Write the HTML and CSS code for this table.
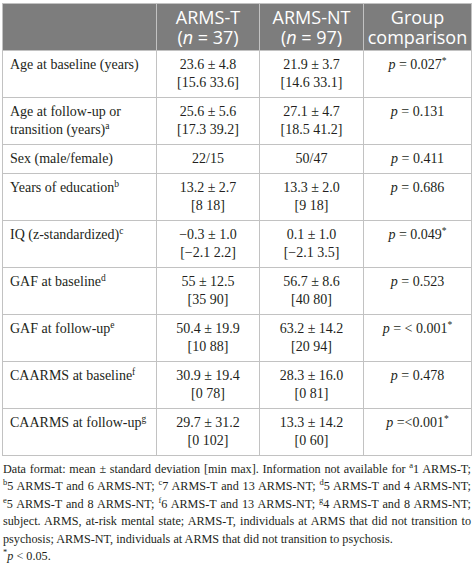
FILE: index.html
```html
<!DOCTYPE html>
<html>
<head>
<meta charset="utf-8">
<link rel="stylesheet" href="styles.css">
</head>
<body>
<div class="page">
<table class="tbl">
  <colgroup>
    <col class="c1"><col class="c2"><col class="c3"><col class="c4">
  </colgroup>
  <thead>
    <tr>
      <th></th>
      <th>ARMS-T<br>(<i>n</i> = 37)</th>
      <th>ARMS-NT<br>(<i>n</i> = 97)</th>
      <th>Group<br>comparison</th>
    </tr>
  </thead>
  <tbody>
    <tr><td>Age at baseline (years)</td><td>23.6 ± 4.8<br>[15.6 33.6]</td><td>21.9 ± 3.7<br>[14.6 33.1]</td><td><i>p</i> = 0.027<sup>*</sup></td></tr>
    <tr><td>Age at follow-up or transition (years)<sup>a</sup></td><td>25.6 ± 5.6<br>[17.3 39.2]</td><td>27.1 ± 4.7<br>[18.5 41.2]</td><td><i>p</i> = 0.131</td></tr>
    <tr><td>Sex (male/female)</td><td>22/15</td><td>50/47</td><td><i>p</i> = 0.411</td></tr>
    <tr><td>Years of education<sup>b</sup></td><td>13.2 ± 2.7<br>[8 18]</td><td>13.3 ± 2.0<br>[9 18]</td><td><i>p</i> = 0.686</td></tr>
    <tr><td>IQ (z-standardized)<sup>c</sup></td><td>−0.3 ± 1.0<br>[−2.1 2.2]</td><td>0.1 ± 1.0<br>[−2.1 3.5]</td><td><i>p</i> = 0.049<sup>*</sup></td></tr>
    <tr><td>GAF at baseline<sup>d</sup></td><td>55 ± 12.5<br>[35 90]</td><td>56.7 ± 8.6<br>[40 80]</td><td><i>p</i> = 0.523</td></tr>
    <tr><td>GAF at follow-up<sup>e</sup></td><td>50.4 ± 19.9<br>[10 88]</td><td>63.2 ± 14.2<br>[20 94]</td><td><i>p</i> = &lt; 0.001<sup>*</sup></td></tr>
    <tr><td>CAARMS at baseline<sup>f</sup></td><td>30.9 ± 19.4<br>[0 78]</td><td>28.3 ± 16.0<br>[0 81]</td><td><i>p</i> = 0.478</td></tr>
    <tr><td>CAARMS at follow-up<sup>g</sup></td><td>29.7 ± 31.2<br>[0 102]</td><td>13.3 ± 14.2<br>[0 60]</td><td><i>p</i> =&lt;0.001<sup>*</sup></td></tr>
  </tbody>
</table>
<div class="note">
  <span class="ln full">Data format: mean ± standard deviation [min max]. Information not available for <sup>a</sup>1 ARMS-T;</span>
  <span class="ln full"><sup>b</sup>5 ARMS-T and 6 ARMS-NT; <sup>c</sup>7 ARMS-T and 13 ARMS-NT; <sup>d</sup>5 ARMS-T and 4 ARMS-NT;</span>
  <span class="ln full"><sup>e</sup>5 ARMS-T and 8 ARMS-NT; <sup>f</sup>6 ARMS-T and 13 ARMS-NT; <sup>g</sup>4 ARMS-T and 8 ARMS-NT;</span>
  <span class="ln full">subject. ARMS, at-risk mental state; ARMS-T, individuals at ARMS that did not transition to</span>
  <span class="ln">psychosis; ARMS-NT, individuals at ARMS that did not transition to psychosis.</span>
  <span class="ln"><sup>*</sup><i>p</i> &lt; 0.05.</span>
</div>
</div>
</body>
</html>
```
FILE: styles.css
```css
html, body {
  margin: 0;
  padding: 0;
  background: #ffffff;
}
.page {
  padding: 3px 3px 0 2px;
  font-family: "Liberation Serif", "Times New Roman", serif;
  color: #231f20;
}
.tbl {
  border-collapse: collapse;
  width: 469px;
  table-layout: fixed;
}
.c1 { width: 154px; }
.c2 { width: 103px; }
.c3 { width: 104px; }
.c4 { width: 108px; }
.tbl th, .tbl td {
  border: 1.5px solid #c2c2c2;
}
.tbl th {
  background: #7d7d7d;
  color: #ffffff;
  font-family: "Open Sans", "Liberation Sans", sans-serif;
  font-weight: 400;
  font-size: 18px;
  line-height: 20px;
  height: 47px;
  padding: 0 1px;
  text-align: center;
  vertical-align: middle;
  box-sizing: border-box;
}
.tbl td {
  font-size: 14px;
  line-height: 18px;
  padding: 5px 4px 5px 4px;
  vertical-align: top;
  text-align: center;
  height: 46px;
  box-sizing: border-box;
}
.tbl td:first-child {
  text-align: left;
  padding-left: 7px;
}
.tbl tr:nth-child(3) td {
  height: 28px;
}
.tbl sup {
  font-size: 9.5px;
  line-height: 0;
  vertical-align: 5px;
}
.note {
  margin: 5px 0 0 1px;
  width: 468px;
  font-size: 12.2px;
  line-height: 17.4px;
}
.ln {
  display: block;
  text-align: left;
}
.ln.full {
  text-align: justify;
  text-align-last: justify;
}
.note sup {
  font-size: 8.5px;
  line-height: 0;
  vertical-align: 5px;
}
```
